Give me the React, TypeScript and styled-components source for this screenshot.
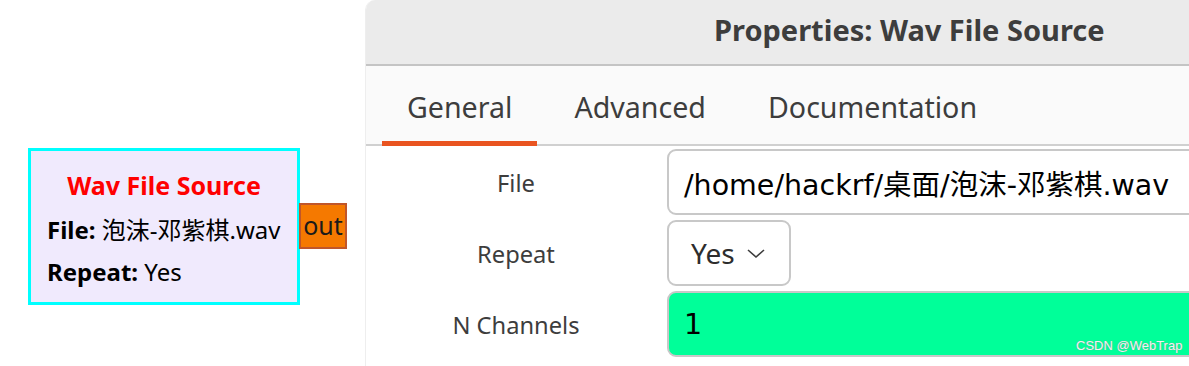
import React from 'react';
import styled, { createGlobalStyle } from 'styled-components';

const GlobalStyle = createGlobalStyle`
  html, body {
    margin: 0;
    padding: 0;
    background: #ffffff;
    overflow: hidden;
  }
  body {
    font-family: "Noto Sans", "Noto Sans CJK SC", sans-serif;
  }
`;

function App() {
  return (
    <Page>
      <GlobalStyle />
      <Canvas>
        <Block>
          <BlockBox>
            <BlockTitle>Wav File Source</BlockTitle>
            <BlockParam>
              <b>File:</b> 泡沫-邓紫棋.wav
            </BlockParam>
            <BlockParam>
              <b>Repeat:</b> Yes
            </BlockParam>
          </BlockBox>
          <Port>out</Port>
        </Block>
      </Canvas>
      <Dialog>
        <Header>Properties: Wav File Source</Header>
        <TabBar>
          <Tab active>General</Tab>
          <Tab>Advanced</Tab>
          <Tab>Documentation</Tab>
        </TabBar>
        <Form>
          <Label>File</Label>
          <Entry>/home/hackrf/桌面/泡沫-邓紫棋.wav</Entry>
          <Label>Repeat</Label>
          <Combo>
            Yes
            <svg width="20" height="12" viewBox="0 0 20 12">
              <path d="M2 3 L10 10 L18 3" fill="none" stroke="#3d3d3d" strokeWidth="1.6" />
            </svg>
          </Combo>
          <Label>N Channels</Label>
          <Entry valid>1</Entry>
        </Form>
        <Watermark>CSDN @WebTrap</Watermark>
      </Dialog>
    </Page>
  );
}
export default App;

const Page = styled.div`
  display: flex;
  width: 1189px;
  height: 366px;
  overflow: hidden;
`;
const Canvas = styled.div`
  width: 365px;
  flex-shrink: 0;
  padding: 148px 0 0 28px;
  box-sizing: border-box;
`;
const Block = styled.div`
  display: flex;
  align-items: center;
`;
const BlockBox = styled.div`
  width: 272px;
  height: 157px;
  box-sizing: border-box;
  border: 3px solid #00ffff;
  background-color: #f0eafd;
  padding: 16px 0 0 16px;
  color: #000;
`;
const BlockTitle = styled.div`
  color: #ff0000;
  font-weight: 700;
  font-size: 25px;
  text-align: center;
  padding-right: 16px;
  line-height: 36px;
  margin-bottom: 6px;
`;
const BlockParam = styled.div`
  font-size: 24px;
  line-height: 42px;
  white-space: nowrap;
  b {
    font-weight: 700;
  }
`;
const Port = styled.div`
  margin-left: -1px;
  margin-top: -2px;
  width: 48px;
  height: 46px;
  box-sizing: border-box;
  background-color: #f57900;
  border: 2px solid #c0562a;
  font-size: 25px;
  line-height: 40px;
  text-align: center;
  color: #1a1a1a;
`;
const Dialog = styled.div`
  position: relative;
  width: 900px;
  flex-shrink: 0;
  display: flex;
  flex-direction: column;
  background: #ffffff;
  border-left: 1px solid #eeeeee;
  border-top-left-radius: 10px;
  overflow: hidden;
`;
const Header = styled.div`
  height: 66px;
  box-sizing: border-box;
  background: #ebebeb;
  border-bottom: 2px solid #c4c4c4;
  font-size: 29px;
  font-weight: 700;
  color: #3d3d3d;
  line-height: 60px;
  padding-left: 348px;
  white-space: nowrap;
`;
const TabBar = styled.div`
  display: flex;
  height: 80px;
  box-sizing: border-box;
  background: #fafafa;
  border-bottom: 2px solid #d0d0d0;
  padding-left: 16px;
`;
const Tab = styled.div<{ active?: boolean }>`
  padding: 0 25px;
  margin-right: 12px;
  font-size: 28.6px;
  color: #3d3d3d;
  line-height: 81px;
  box-sizing: border-box;
  border-bottom: 5px solid ${(p) => (p.active ? '#e95420' : 'transparent')};
  margin-bottom: -2px;
`;
const Form = styled.div`
  display: grid;
  grid-template-columns: 300px 1fr;
  column-gap: 1px;
  row-gap: 5px;
  padding-top: 3px;
  grid-auto-rows: 66px;
`;
const Label = styled.div`
  display: flex;
  align-items: center;
  justify-content: center;
  font-size: 23.7px;
  color: #3d3d3d;
  padding-top: 2px;
`;
const Entry = styled.div<{ valid?: boolean }>`
  display: flex;
  align-items: center;
  box-sizing: border-box;
  border: 2px solid #c8c8c8;
  border-radius: 9px;
  background: ${(p) => (p.valid ? '#00ff99' : '#ffffff')};
  padding-left: 15px;
  font-family: "DejaVu Sans", "Noto Sans CJK SC", sans-serif;
  font-size: 28.5px;
  color: #000;
  white-space: nowrap;
`;
const Combo = styled.div`
  display: flex;
  align-items: center;
  gap: 11px;
  width: 124px;
  box-sizing: border-box;
  border: 2px solid #c8c8c8;
  border-radius: 9px;
  padding-left: 22px;
  font-size: 28px;
  color: #2d2d2d;
`;
const Watermark = styled.div`
  position: absolute;
  left: 710px;
  top: 338px;
  font-family: "Liberation Sans", sans-serif;
  font-size: 13px;
  color: #f2f2f2;
  text-shadow: 0 0 1px #888;
`;
